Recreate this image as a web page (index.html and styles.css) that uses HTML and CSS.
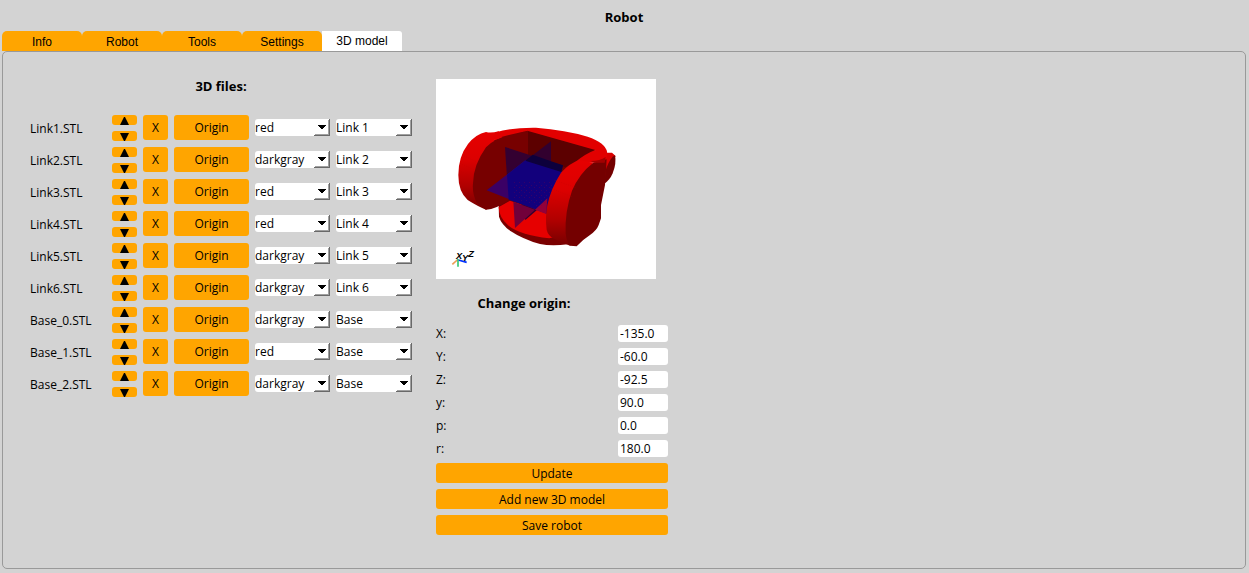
FILE: index.html
```html
<!DOCTYPE html>
<html lang="en">
<head>
<meta charset="utf-8">
<title>Robot</title>
<link rel="stylesheet" href="styles.css">
</head>
<body>
<h1 class="title">Robot</h1>
<nav class="tabs" role="tablist">
  <button class="tab" role="tab">Info</button>
  <button class="tab" role="tab">Robot</button>
  <button class="tab" role="tab">Tools</button>
  <button class="tab" role="tab">Settings</button>
  <button class="tab tab-active" role="tab" aria-selected="true">3D model</button>
</nav>
<main class="panel">
  <section class="files">
    <h2 class="heading">3D files:</h2>
    <div class="file-list" id="files"></div>
  </section>
  <section class="side">
    <svg class="preview" viewBox="0 -93 660 600" role="img" aria-label="3D preview">
      <defs>
        <pattern id="grain" width="15" height="15" patternUnits="userSpaceOnUse">
          <path fill="#730045" d="M0 0h3v3H0zM9 6h3v3H9z"/>
        </pattern>
        <linearGradient id="rim" x1="0" y1="0" x2="0" y2="1">
          <stop offset="0" stop-color="#e60000"/>
          <stop offset=".35" stop-color="#dc0000"/>
          <stop offset=".7" stop-color="#b00000"/>
          <stop offset="1" stop-color="#760000"/>
        </linearGradient>
      </defs>
      <rect x="0" y="-93" width="660" height="600" fill="#fff"/>
      <!-- base disc -->
      <path fill="#7a0000" d="M188 285L189 320Q196 343 222 362Q262 388 312 402Q345 409 396 403L400 360L340 300Z"/>
      <path fill="#e60000" d="M217 262L188 292Q189 322 216 346Q252 376 340 385L360 380L345 300Z"/>
      <!-- back wall -->
      <path fill="#700000" d="M150 110L190 78L275 60L480 118L400 200L340 312L222 272L190 290Z"/>
      <path fill="#5c0000" d="M275 62L480 119L425 150L388 172L275 135Z"/>
      <!-- pin at the right -->
      <path fill="#d90000" d="M506 128H528L539 138L520 180L508 218L490 220V150Z"/>
      <path fill="#740000" d="M537 136Q542 160 530 190Q521 211 506 220L508 184Q515 158 530 140Z"/>
      <!-- left arm -->
      <path fill="url(#rim)" d="M188 64Q165 70 150 66Q120 72 96 102Q67 140 67 195Q67 245 95 270Q125 289 150 299L175 280V90L200 84Z"/>
      <path fill="#770000" d="M276 62L220 76Q175 86 150 112Q112 165 111 220Q108 250 122 278L150 299Q180 298 218 270L276 220Z"/>
      <!-- top ring -->
      <path fill="#e20000" d="M180 67Q230 52 300 53Q390 60 455 80Q508 98 513 125Q516 143 504 155L470 158L418 156Q450 130 478 120L274 62L216 76Q195 80 178 90L170 80Z"/>
      <!-- planes -->
      <path fill="#340031" d="M207 111L381 167L340 310L217 266Z"/>
      <path fill="#32002f" d="M345 94V264L268 330L232 180Z"/>
      <path fill="#3b0065" d="M152 241L268 151L382 187L334 312Z"/>
      <path fill="#12007c" d="M268 151L382 187L334 309L218 269L213 194Z"/>
      <path fill="#0d003c" d="M290 134L345 154L381 166L376 186L268 152Z"/>
      <path fill="#71003a" d="M232 275L297 299L237 354Z"/>
      <path fill="#93003a" d="M297 299L334 265L331 312Z"/>
      <path fill="url(#grain)" opacity=".35" d="M228 215H352L336 290L300 290L228 262Z"/>
      <!-- right arm -->
      <path fill="url(#rim)" d="M472 158L430 151Q402 159 375 188Q345 235 334 285Q327 320 332 360Q337 379 355 387L402 407L425 380L450 190Z"/>
      <path fill="#740000" d="M512 148L472 158Q430 190 408 242Q386 305 389 370Q391 394 402 407L422 409Q440 389 462 375Q482 361 488 345L495 325V285L507 225L510 180Z"/>
      <path fill="#a20000" d="M464 153Q492 153 509 141L506 158L475 158Z"/>
      <path fill="none" stroke="#c00000" stroke-width="1" stroke-dasharray="3 4" d="M78 135L121 155M72 160L116 180M69 181L112 203M356 211L418 232M347 236L407 260M338 265L398 285M333 292L392 310"/>
      <!-- axes -->
      <path stroke="#0030ff" stroke-width="5" d="M67 450L92 457"/>
      <path stroke="#ef9d57" stroke-width="5" d="M67 447L49 463"/>
      <path stroke="#35c777" stroke-width="5" d="M66 447V470"/>
      <g class="axis-label">
        <text x="60" y="447">X</text>
        <text x="78" y="454">Y</text>
        <text x="97" y="440">Z</text>
      </g>
    </svg>
    <form class="origin">
      <h2 class="heading origin-heading">Change origin:</h2>
      <label for="ox">X:</label><input id="ox" value="-135.0">
      <label for="oy">Y:</label><input id="oy" value="-60.0">
      <label for="oz">Z:</label><input id="oz" value="-92.5">
      <label for="yaw">y:</label><input id="yaw" value="90.0">
      <label for="pitch">p:</label><input id="pitch" value="0.0">
      <label for="roll">r:</label><input id="roll" value="180.0">
    </form>
    <div class="actions">
      <button class="btn" type="button">Update</button>
      <button class="btn" type="button">Add new 3D model</button>
      <button class="btn" type="button">Save robot</button>
    </div>
  </section>
</main>
<script src="app.js"></script>
</body>
</html>
```
FILE: styles.css
```css
* { box-sizing: border-box; }

body {
  margin: 0;
  min-height: 100vh;
  padding: 0 3px 4px 2px;
  display: flex;
  flex-direction: column;
  background: #d3d3d3;
  color: #000;
  font: 12px/16px "Open Sans", "Noto Sans", sans-serif;
}

button, input, select {
  margin: 0;
  padding: 0;
  border: 0;
  color: inherit;
  font: inherit;
}

.title {
  margin: 0;
  padding: 9px 0 6px;
  font-size: 13px;
  line-height: 16px;
  text-align: center;
}

.tabs { display: flex; }

.tab {
  width: 80px;
  height: 20px;
  padding-top: 3px;
  border-radius: 5px 5px 0 0;
  background: orange;
  font: 12px/17px "Liberation Sans", sans-serif;
}

.tab-active {
  padding-top: 1px;
  border-radius: 0 3px 0 0;
  background: #fff;
}

.panel {
  flex: 1;
  display: flex;
  align-items: flex-start;
  gap: 24px;
  padding: 27px;
  border: 1px solid #999;
  border-radius: 5px;
}

.heading {
  margin: 0;
  font-size: 13px;
  line-height: 16px;
  text-align: center;
}

.files .heading {
  line-height: 14px;
  margin-bottom: 22px;
}

.file-list {
  display: grid;
  gap: 6px;
}

.file {
  display: grid;
  grid-template-columns: 76px 25px 25px 75px 75px 76px;
  align-items: center;
  column-gap: 6px;
  height: 26px;
}

.file-name { padding-top: 1px; }

.btn {
  height: 20px;
  padding-top: 2px;
  border-radius: 3px;
  background: orange;
  text-align: center;
}

.file .btn {
  height: 25px;
  padding-top: 0;
  align-self: start;
}

.arrows {
  display: grid;
  gap: 6px;
}

.file .arrow {
  display: flex;
  justify-content: center;
  height: 10px;
}

.arrow svg {
  width: 9px;
  height: 10px;
}

.combo {
  position: relative;
  height: 17px;
  margin-bottom: 1px;
}

.combo select {
  display: block;
  appearance: none;
  width: 100%;
  height: 17px;
  border-radius: 3px;
  background: #fff;
  line-height: 17px;
}

.combo svg {
  position: absolute;
  top: 0;
  right: 0;
  width: 16px;
  height: 17px;
  pointer-events: none;
}

.side { padding-bottom: 5px; }

.preview {
  display: block;
  width: 220px;
  height: 200px;
}

.axis-label {
  font: italic bold 28px "Liberation Sans", sans-serif;
}

.origin {
  display: grid;
  grid-template-columns: 176px 50px;
  gap: 6px;
  padding: 16px 0 6px;
}

.origin-heading {
  grid-column: 1;
  margin-bottom: 8px;
}

.origin label {
  grid-column: 1;
  height: 17px;
  line-height: 18px;
}

.origin input {
  width: 50px;
  height: 17px;
  padding: 0 2px;
  border-radius: 3px;
  background: #fff;
}

.actions {
  display: grid;
  gap: 6px;
}
```
FILE: app.js
```js
const files = [
  ["Link1.STL", "red", "Link 1"],
  ["Link2.STL", "darkgray", "Link 2"],
  ["Link3.STL", "red", "Link 3"],
  ["Link4.STL", "red", "Link 4"],
  ["Link5.STL", "darkgray", "Link 5"],
  ["Link6.STL", "darkgray", "Link 6"],
  ["Base_0.STL", "darkgray", "Base"],
  ["Base_1.STL", "red", "Base"],
  ["Base_2.STL", "darkgray", "Base"]
];
const colors = ["red", "darkgray"];
const parts = ["Base", "Link 1", "Link 2", "Link 3", "Link 4", "Link 5", "Link 6"];

function combo(label, options, value) {
  const items = options.map(o => `<option${o === value ? " selected" : ""}>${o}</option>`).join("");
  return `<div class="combo"><select aria-label="${label}">${items}</select>
    <svg viewBox="0 0 16 17"><rect width="15" height="16" fill="#fff"/><path fill="#696969" d="M15 0h1v17H0v-1h15z"/><path fill="#a0a0a0" d="M14 1h1v15H1v-1h13z"/><path d="M4 6h8v1h-1v1h-1v1H9v1H7V9H6V8H5V7H4z"/></svg></div>`;
}

document.getElementById("files").innerHTML = files.map(([name, color, part]) => `
  <div class="file">
    <span class="file-name">${name}</span>
    <div class="arrows">
      <button class="btn arrow" aria-label="Move ${name} up"><svg viewBox="0 0 9 10"><path d="M4 2h1l4 8H0z"/></svg></button>
      <button class="btn arrow" aria-label="Move ${name} down"><svg viewBox="0 0 9 10"><path d="M0 2h9L5 10H4z"/></svg></button>
    </div>
    <button class="btn" aria-label="Remove ${name}">X</button>
    <button class="btn">Origin</button>
    ${combo(name + " color", colors, color)}
    ${combo(name + " part", parts, part)}
  </div>`).join("");
```
